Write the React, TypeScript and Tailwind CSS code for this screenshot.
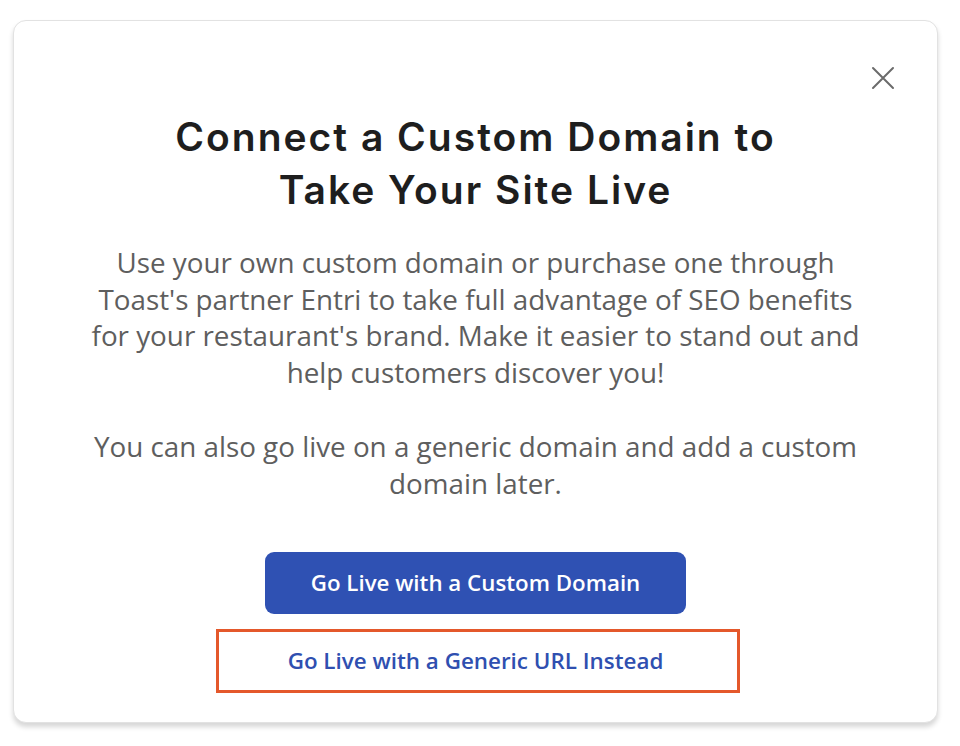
import React from 'react';

const CloseIcon: React.FC = () => (
  <svg width="26" height="26" viewBox="0 0 26 26" fill="none" stroke="#6b6b6b" strokeWidth="2" strokeLinecap="round">
    <path d="M3 3 L23 23 M23 3 L3 23" />
  </svg>
);

const App: React.FC = () => {
  return (
    <div className="w-[960px] h-[746px] bg-white pt-[20px] pl-[13px]">
      <div className="relative w-[925px] h-[703px] bg-white rounded-[13px] border border-[#e2e2e2] shadow-[0_4px_5px_rgba(0,0,0,0.16)] flex flex-col items-center">
        <button className="absolute right-[41px] top-[44px] p-0">
          <CloseIcon />
        </button>

        <h1 className="mt-[89px] text-center text-[#1e1e1e] font-semibold text-[39px] leading-[53px] font-['Inter',sans-serif] tracking-[2px]">
          Connect a Custom Domain to
          <br />
          Take Your Site Live
        </h1>

        <div className="mt-[28px] text-center text-[#5e5e5e] text-[27.8px] leading-[36.6px] font-['Open_Sans',sans-serif]">
          <p>
            Use your own custom domain or purchase one through
            <br />
            Toast's partner Entri to take full advantage of SEO benefits
            <br />
            for your restaurant's brand. Make it easier to stand out and
            <br />
            help customers discover you!
          </p>
          <p className="mt-[38px]">
            You can also go live on a generic domain and add a custom
            <br />
            domain later.
          </p>
        </div>

        <button className="mt-[50px] w-[421px] h-[62px] rounded-[9px] bg-[#2f51b3] text-white text-[22.3px] font-semibold font-['Open_Sans',sans-serif]">
          Go Live with a Custom Domain
        </button>

        <div className="mt-[15px] ml-[4px] w-[524px] h-[64px] border-[3px] border-[#e4582b] flex items-center justify-center">
          <a href="#" className="-ml-[4px] text-[#2f4fb0] text-[22.4px] font-semibold font-['Open_Sans',sans-serif]">
            Go Live with a Generic URL Instead
          </a>
        </div>
      </div>
    </div>
  );
};

export default App;
